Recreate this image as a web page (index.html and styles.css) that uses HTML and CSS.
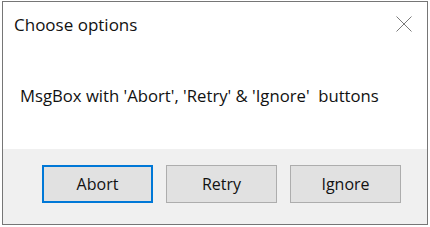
FILE: index.html
```html
<!DOCTYPE html>
<html lang="en">
<head>
  <meta charset="UTF-8">
  <title>Choose options</title>
  <link rel="stylesheet" href="styles.css">
</head>
<body>
  <div class="dialog">
    <div class="dialog-body">
      <div class="title-bar">
        <span class="title">Choose options</span>
        <button class="close" aria-label="Close">
          <svg width="16" height="16" viewBox="0 0 16 16">
            <path d="M0.5 0.5 L15.5 15.5 M15.5 0.5 L0.5 15.5" stroke="#7a7a7a" stroke-width="1" fill="none"/>
          </svg>
        </button>
      </div>
      <p class="message">MsgBox with 'Abort', 'Retry' &amp; 'Ignore'&nbsp; buttons</p>
    </div>
    <div class="dialog-footer">
      <button class="btn btn-default">Abort</button>
      <button class="btn">Retry</button>
      <button class="btn">Ignore</button>
    </div>
  </div>
</body>
</html>
```

FILE: styles.css
```css
body {
  margin: 0;
  padding: 1px 0 0 2px;
  background: #fff;
  font-family: "Open Sans", "Noto Sans", sans-serif;
  color: #000;
}

.dialog {
  width: 424px;
  height: 222px;
  border: 1px solid #767676;
  display: flex;
  flex-direction: column;
  background: #fff;
}

.dialog-body {
  flex: 1;
}

.title-bar {
  display: flex;
  justify-content: space-between;
  align-items: flex-start;
  padding: 11px 15px 0 11px;
}

.title {
  font-size: 17px;
  line-height: 24px;
  color: #111;
}

.close {
  border: 0;
  background: none;
  padding: 0;
  margin-top: 3px;
  width: 16px;
  height: 16px;
  display: flex;
}

.message {
  margin: 48px 0 0 17px;
  font-size: 16.7px;
  line-height: 22px;
  color: #111;
}

.dialog-footer {
  height: 75px;
  background: #f0f0f0;
  display: flex;
  align-items: flex-start;
  gap: 13px;
  padding: 16px 0 0 39px;
  box-sizing: border-box;
}

.btn {
  width: 111px;
  height: 38px;
  background: #e1e1e1;
  border: 1px solid #adadad;
  font-family: inherit;
  font-size: 16px;
  color: #111;
  padding: 0;
}

.btn-default {
  border: 2px solid #0078d7;
}
```
